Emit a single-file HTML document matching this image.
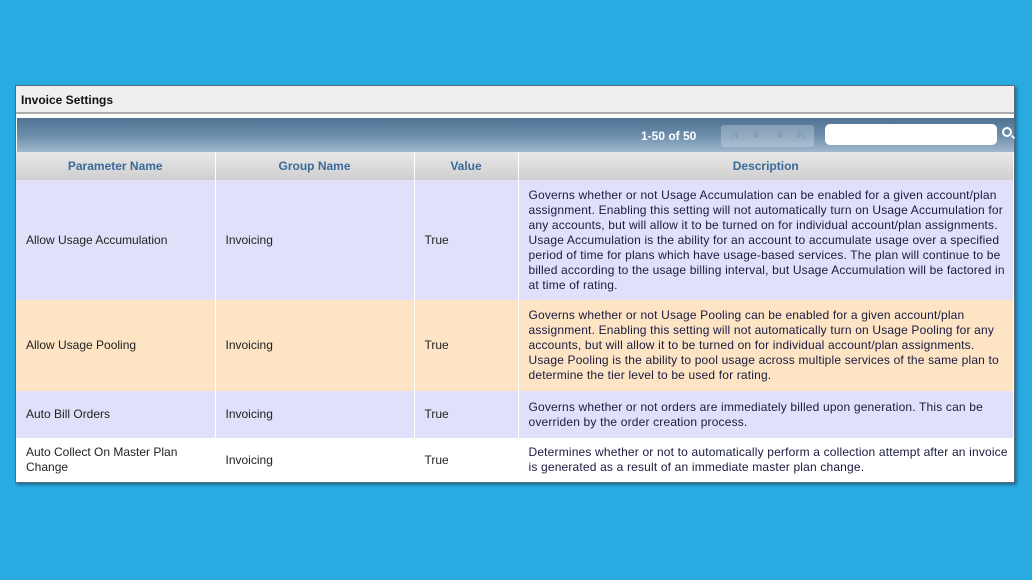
<!DOCTYPE html>
<html><head><meta charset="utf-8"><style>
*{margin:0;padding:0;box-sizing:border-box}
body{width:1032px;height:580px;background:#29abe2;font-family:"Liberation Sans",Arial,sans-serif;position:relative;overflow:hidden}
.panel{position:absolute;left:15px;top:85px;width:1000px;height:398px;background:#fff;border:1px solid #5a6a78;box-shadow:2px 2px 3px rgba(0,0,0,.35)}
.title{height:28px;background:#efefef;font-size:12px;font-weight:bold;color:#111;padding:7px 0 0 5px;border-bottom:2px solid #aaa}
.tool{position:absolute;left:1px;top:32px;width:997px;height:35px;background:linear-gradient(#4f7292,#6c8eac 50%,#a4bbcf)}
.cnt{position:absolute;left:624px;top:11px;color:#fff;font-size:12px;font-weight:bold}
.pg{position:absolute;left:704px;top:7px;width:93px;height:22px;background:rgba(255,255,255,.25);border-radius:3px}
.pg span{position:absolute;top:6px;width:0;height:0;border-top:4px solid transparent;border-bottom:4px solid transparent}
.l{border-right:5px solid #8a9cae}.r{border-left:5px solid #8a9cae}
.bar{position:absolute;top:6px;width:1px;height:8px;background:#8a9cae}
.srch{position:absolute;left:808px;top:6px;width:172px;height:21px;background:#fff;border-radius:5px}
.mag{position:absolute;left:985px;top:9px;width:10px;height:10px;border:2px solid #fff;border-radius:50%}
.mag:after{content:"";position:absolute;left:7px;top:7px;width:4px;height:2px;background:#fff;transform:rotate(45deg)}
table{position:absolute;left:0;top:66px;border-collapse:collapse;width:998px;font-size:12px;color:#222;table-layout:fixed}
th{height:28px;background:linear-gradient(#e8e8e8,#cfcfcf);color:#3b6a9a;font-size:12px;border-right:1px solid #fff}
td{padding:0 10px;border-right:1px solid #fff;vertical-align:middle;line-height:15px}
td.d{color:#1a1a40;padding-right:0;white-space:nowrap;overflow:hidden;letter-spacing:0.17px}
.a td{background:#e0e0fb}.b td{background:#fde4c4}.c td{background:#fff}
</style></head><body>
<div class="panel">
<div class="title">Invoice Settings</div>
<div class="tool"><div class="cnt">1-50 of 50</div>
<div class="pg"><i class="bar" style="left:10px"></i><span class="l" style="left:12px"></span><span class="l" style="left:32px"></span><span class="r" style="left:57px"></span><span class="r" style="left:76px"></span><i class="bar" style="left:82px"></i></div>
<div class="srch"></div><div class="mag"></div></div>
<table>
<tr><th style="width:199px">Parameter Name</th><th style="width:199px">Group Name</th><th style="width:104px">Value</th><th>Description</th></tr>
<tr class="a" style="height:120px"><td>Allow Usage Accumulation</td><td>Invoicing</td><td>True</td><td class="d">Governs whether or not Usage Accumulation can be enabled for a given account/plan<br>assignment. Enabling this setting will not automatically turn on Usage Accumulation for<br>any accounts, but will allow it to be turned on for individual account/plan assignments.<br>Usage Accumulation is the ability for an account to accumulate usage over a specified<br>period of time for plans which have usage-based services. The plan will continue to be<br>billed according to the usage billing interval, but Usage Accumulation will be factored in<br>at time of rating.</td></tr>
<tr class="b" style="height:91px"><td>Allow Usage Pooling</td><td>Invoicing</td><td>True</td><td class="d">Governs whether or not Usage Pooling can be enabled for a given account/plan<br>assignment. Enabling this setting will not automatically turn on Usage Pooling for any<br>accounts, but will allow it to be turned on for individual account/plan assignments.<br>Usage Pooling is the ability to pool usage across multiple services of the same plan to<br>determine the tier level to be used for rating.</td></tr>
<tr class="a" style="height:47px"><td>Auto Bill Orders</td><td>Invoicing</td><td>True</td><td class="d">Governs whether or not orders are immediately billed upon generation. This can be<br>overriden by the order creation process.</td></tr>
<tr class="c" style="height:44px"><td>Auto Collect On Master Plan Change</td><td>Invoicing</td><td>True</td><td class="d">Determines whether or not to automatically perform a collection attempt after an invoice<br>is generated as a result of an immediate master plan change.</td></tr>
</table>
</div>
</body></html>
